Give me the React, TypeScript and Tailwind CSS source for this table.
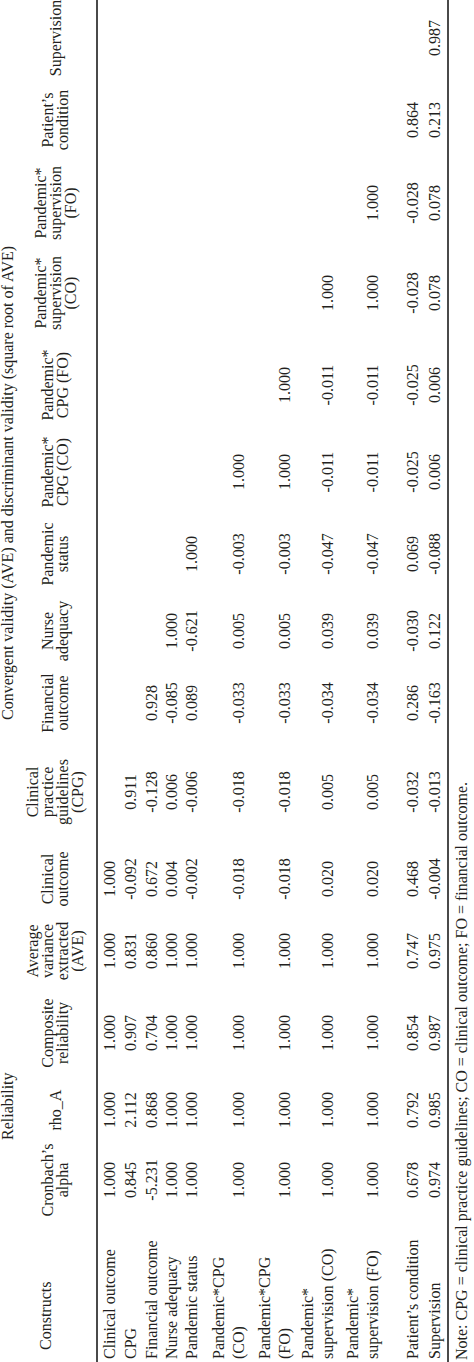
const COLS =
  "grid-cols-[145px_74px_66px_88px_76px_68px_106px_72px_72px_82px_82px_92px_92px_88px_78px_86px]";

const headers: string[][] = [
  ["Cronbach’s", "alpha"],
  ["rho_A"],
  ["Composite", "reliability"],
  ["Average", "variance", "extracted", "(AVE)"],
  ["Clinical", "outcome"],
  ["Clinical", "practice", "guidelines", "(CPG)"],
  ["Financial", "outcome"],
  ["Nurse", "adequacy"],
  ["Pandemic", "status"],
  ["Pandemic*", "CPG (CO)"],
  ["Pandemic*", "CPG (FO)"],
  ["Pandemic*", "supervision", "(CO)"],
  ["Pandemic*", "supervision", "(FO)"],
  ["Patient’s", "condition"],
  ["Supervision"],
];

type Row = { label: string[]; values: string[] };

const rows: Row[] = [
  { label: ["Clinical outcome"], values: ["1.000", "1.000", "1.000", "1.000", "1.000"] },
  { label: ["CPG"], values: ["0.845", "2.112", "0.907", "0.831", "-0.092", "0.911"] },
  {
    label: ["Financial outcome"],
    values: ["-5.231", "0.868", "0.704", "0.860", "0.672", "-0.128", "0.928"],
  },
  {
    label: ["Nurse adequacy"],
    values: ["1.000", "1.000", "1.000", "1.000", "0.004", "0.006", "-0.085", "1.000"],
  },
  {
    label: ["Pandemic status"],
    values: ["1.000", "1.000", "1.000", "1.000", "-0.002", "-0.006", "0.089", "-0.621", "1.000"],
  },
  {
    label: ["Pandemic*CPG", "(CO)"],
    values: ["1.000", "1.000", "1.000", "1.000", "-0.018", "-0.018", "-0.033", "0.005", "-0.003", "1.000"],
  },
  {
    label: ["Pandemic*CPG", "(FO)"],
    values: [
      "1.000", "1.000", "1.000", "1.000",
      "-0.018", "-0.018", "-0.033", "0.005", "-0.003", "1.000", "1.000",
    ],
  },
  {
    label: ["Pandemic*", "supervision (CO)"],
    values: [
      "1.000", "1.000", "1.000", "1.000",
      "0.020", "0.005", "-0.034", "0.039", "-0.047", "-0.011", "-0.011", "1.000",
    ],
  },
  {
    label: ["Pandemic*", "supervision (FO)"],
    values: [
      "1.000", "1.000", "1.000", "1.000",
      "0.020", "0.005", "-0.034", "0.039", "-0.047", "-0.011", "-0.011", "1.000", "1.000",
    ],
  },
  {
    label: ["Patient’s condition"],
    values: [
      "0.678", "0.792", "0.854", "0.747",
      "0.468", "-0.032", "0.286", "-0.030", "0.069", "-0.025", "-0.025", "-0.028", "-0.028", "0.864",
    ],
  },
  {
    label: ["Supervision"],
    values: [
      "0.974", "0.985", "0.987", "0.975",
      "-0.004", "-0.013", "-0.163", "0.122", "-0.088", "0.006", "0.006", "0.078", "0.078", "0.213", "0.987",
    ],
  },
];

function Lines({ lines }: { lines: string[] }) {
  return (
    <>
      {lines.map((l, i) => (
        <span key={i} className="block whitespace-nowrap">
          {l}
        </span>
      ))}
    </>
  );
}

export default function App() {
  return (
    <div className="h-[1362px] w-[474px] overflow-hidden bg-white">
      {/* table is laid out landscape, then turned a quarter to the left */}
      <div className="flex h-[474px] w-[1362px] origin-top-left -rotate-90 translate-y-[1362px] flex-col font-['Liberation_Serif',serif] text-[16px] text-[#231f20]">
        <div className={`-mt-[4px] grid ${COLS} grid-rows-[24px_76px]`}>
          <div className="row-span-2 flex items-center pl-[12px] leading-5">Constructs</div>
          <div className="col-span-4 flex items-center whitespace-nowrap pl-[77px] leading-5">
            Reliability
          </div>
          <div className="col-span-11 flex items-center whitespace-nowrap pl-[193px] leading-5">
            Convergent validity (AVE) and discriminant validity (square root of AVE)
          </div>
          {headers.map((h, i) => (
            <div key={i} className="flex flex-col items-center justify-center pb-[6px] text-center leading-[15px]">
              <Lines lines={h} />
            </div>
          ))}
        </div>
        <div className="h-[2px] w-[1367px] bg-[#4a4a4a]" />
        <div className={`grid ${COLS} grid-rows-[24px_21px_21px_20px_20px_47px_46px_43px_45px_40px_22px]`}>
          {rows.map((r, ri) => (
            <div key={ri} className="contents">
              <div className="self-end pb-[2px] pl-[3px] leading-5">
                <Lines lines={r.label} />
              </div>
              {Array.from({ length: 15 }).map((_, ci) => (
                <div key={ci} className="self-end pb-[2px] text-center leading-5 whitespace-nowrap">
                  {r.values[ci] ?? ""}
                </div>
              ))}
            </div>
          ))}
        </div>
        <div className="h-[2px] w-[1367px] bg-[#4a4a4a]" />
        <p className="mt-[3px] whitespace-nowrap pl-[2px] leading-5">
          Note: CPG = clinical practice guidelines; CO = clinical outcome; FO = financial outcome.
        </p>
      </div>
    </div>
  );
}
